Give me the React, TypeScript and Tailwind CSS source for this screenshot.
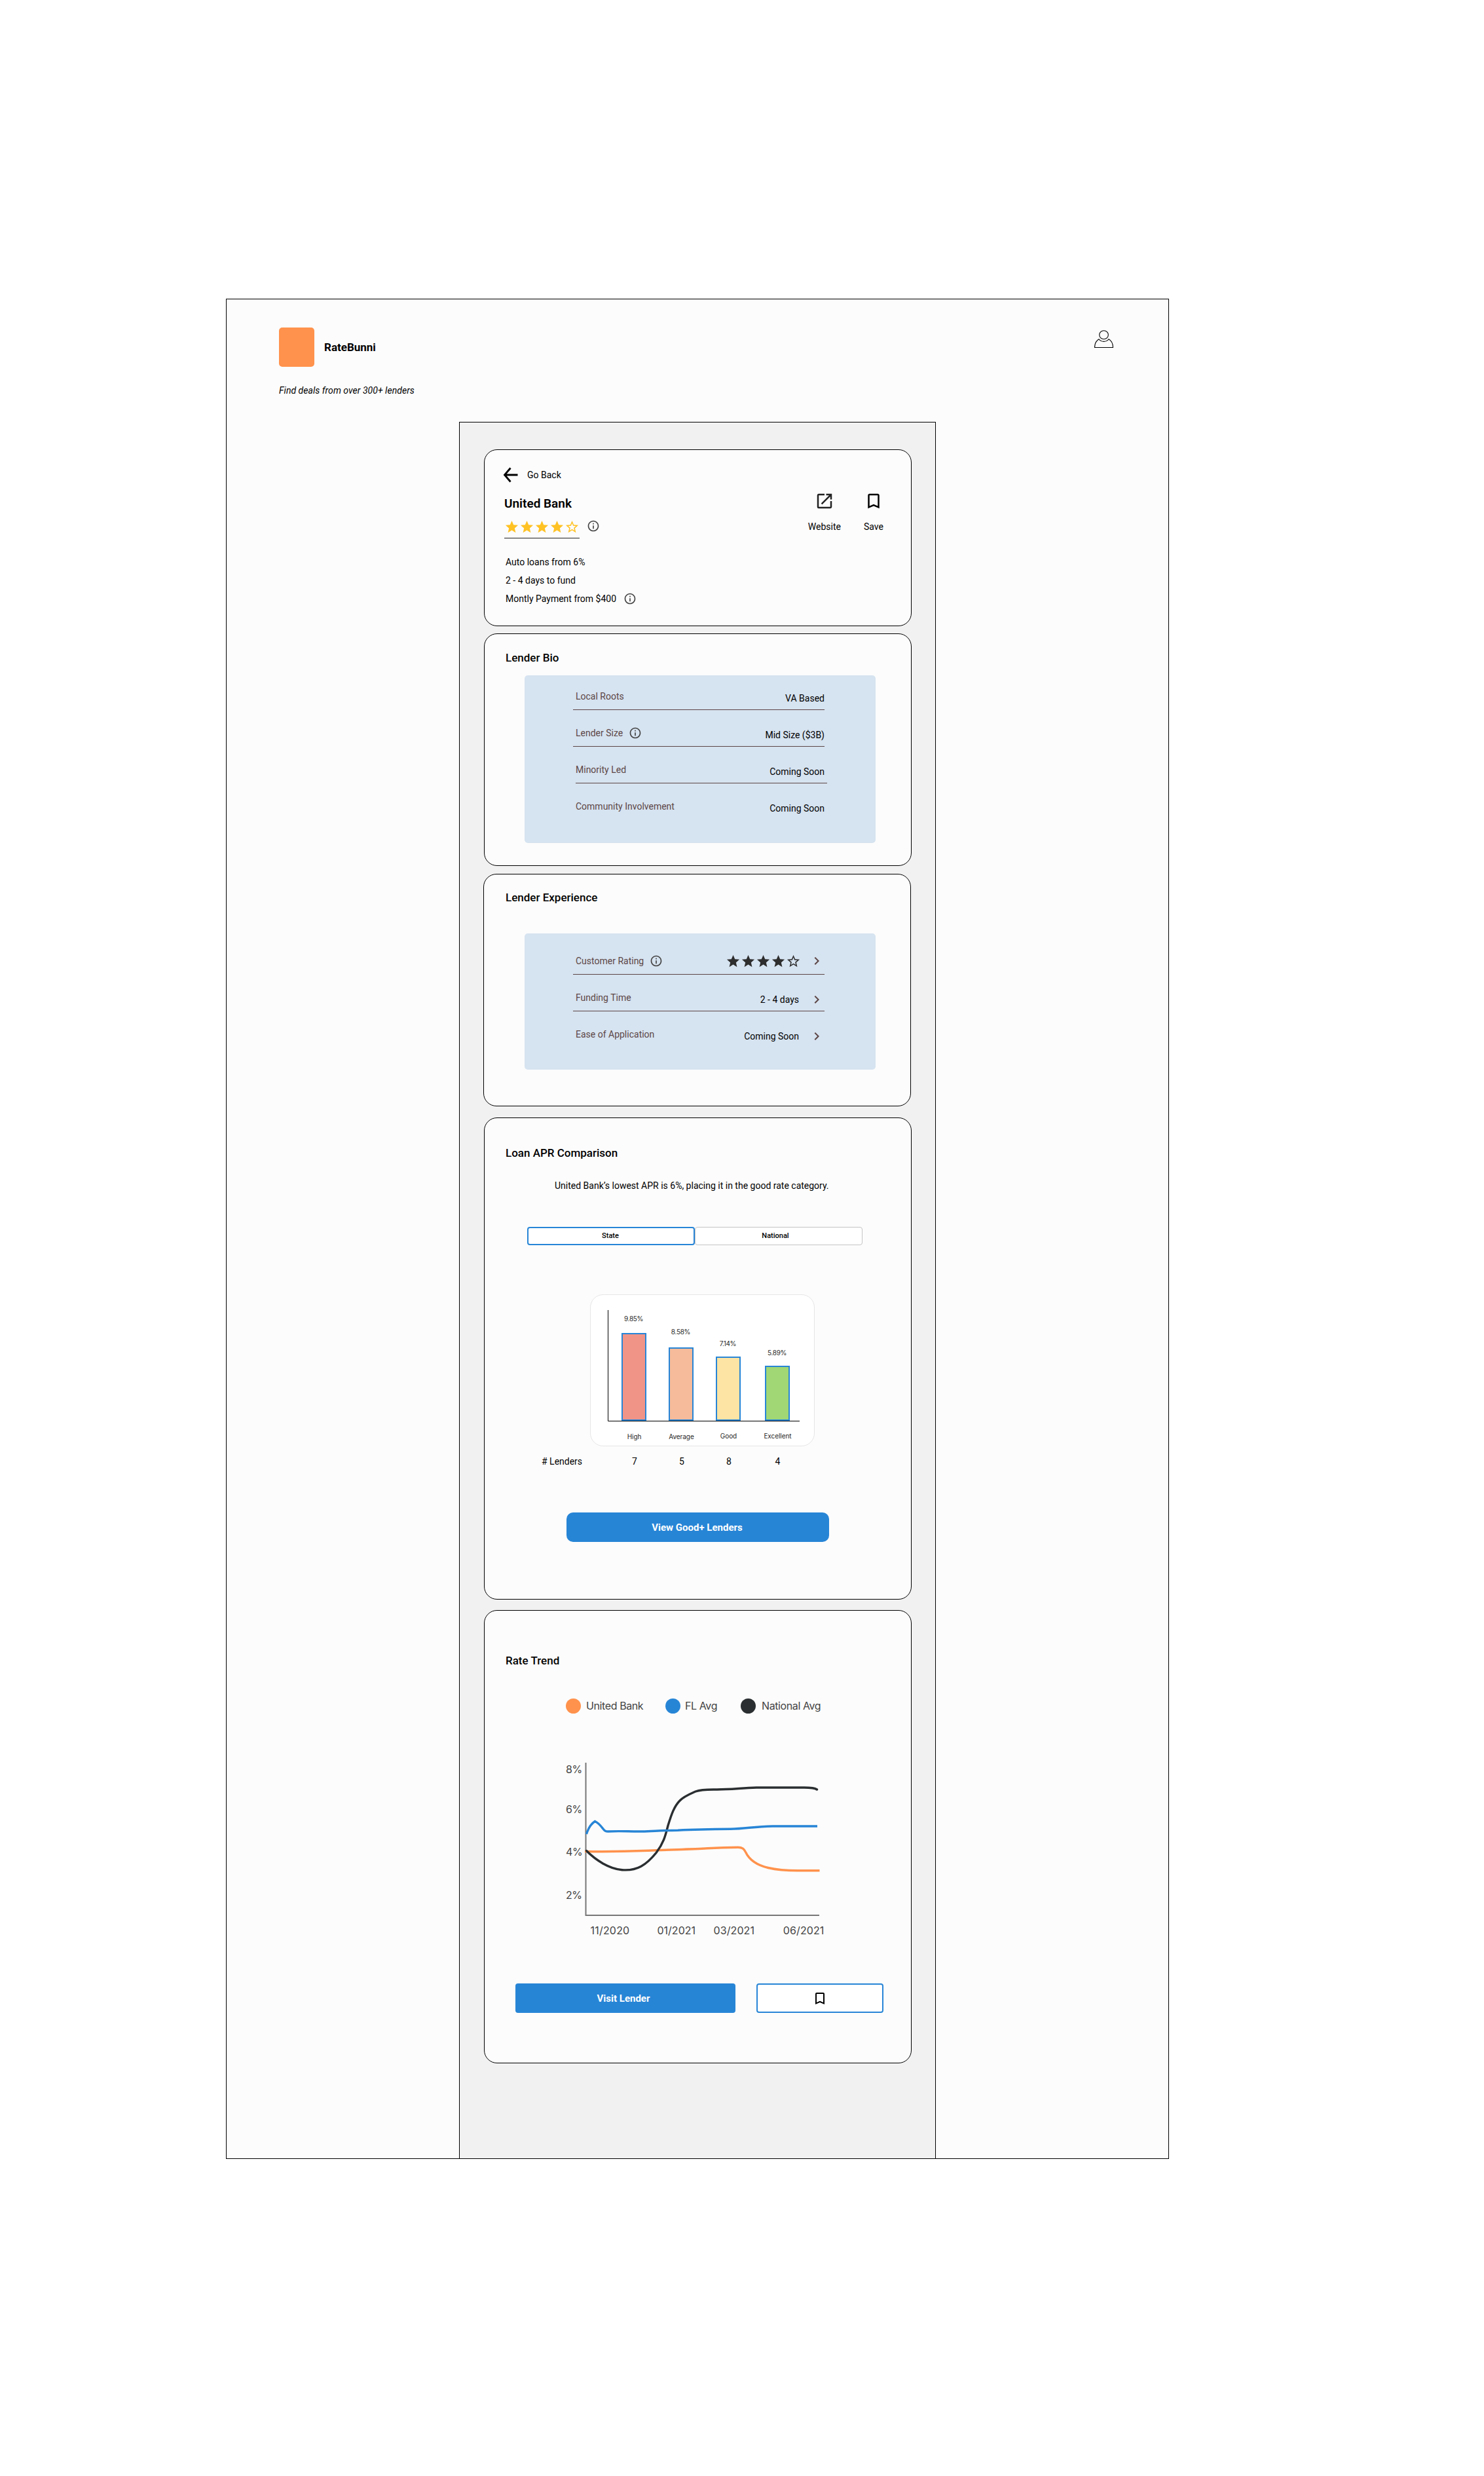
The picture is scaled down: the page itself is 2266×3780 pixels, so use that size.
import { ReactNode } from 'react';
import {
  MdBookmarkBorder,
  MdChevronRight,
  MdInfoOutline,
  MdOpenInNew,
  MdStar,
  MdStarBorder,
} from 'react-icons/md';

const aprBars = [
  { label: 'High', value: '9.85%', lenders: 7, x: 48, height: 134, fill: '#f09488', valueY: 41, labelY: 221 },
  { label: 'Average', value: '8.58%', lenders: 5, x: 120, height: 112, fill: '#f6bb9a', valueY: 61, labelY: 221 },
  { label: 'Good', value: '7.14%', lenders: 8, x: 192, height: 98, fill: '#fde4a4', valueY: 79, labelY: 220 },
  { label: 'Excellent', value: '5.89%', lenders: 4, x: 267, height: 84, fill: '#a1d775', valueY: 93, labelY: 220 },
];

const trendLegend = [
  { label: 'United Bank', dot: 'bg-[#ff924c]', width: 'w-[152px]', gap: 'gap-2' },
  { label: 'FL Avg', dot: 'bg-[#2785d6]', width: 'w-[115px]', gap: 'gap-[7px]' },
  { label: 'National Avg', dot: 'bg-[#2a2e30]', width: 'w-[130px]', gap: 'gap-[9px]' },
];

function Card({ className, children }: { className: string; children: ReactNode }) {
  return (
    <section className={`flex w-[653px] shrink-0 flex-col rounded-[20px] border border-black bg-[#fcfcfc] ${className}`}>
      {children}
    </section>
  );
}

function CardTitle({ children }: { children: ReactNode }) {
  return <h2 className="pl-8 text-[17px] font-medium leading-6">{children}</h2>;
}

function Stars({ rating }: { rating: number }) {
  return (
    <div className="flex">
      {[1, 2, 3, 4, 5].map((n) =>
        n <= rating ? <MdStar key={n} size={23} /> : <MdStarBorder key={n} size={23} />
      )}
    </div>
  );
}

function InfoIcon() {
  return <MdInfoOutline size={20} className="text-[#444]" />;
}

interface DetailRowProps {
  label: string;
  info?: boolean;
  className: string;
  valueClassName?: string;
  children: ReactNode;
}

function DetailRow({ label, info, className, valueClassName = 'pb-[7px]', children }: DetailRowProps) {
  return (
    <div className={`flex w-96 items-end justify-between border-b text-sm ${className}`}>
      <div className="flex h-[30px] gap-[8.5px] pb-2.5 text-[#5c4646]">
        {label}
        {info && <InfoIcon />}
      </div>
      <div className={valueClassName}>{children}</div>
    </div>
  );
}

function LinkValue({ children }: { children: ReactNode }) {
  return (
    <div className="flex h-5 items-center gap-[15px]">
      {children}
      <MdChevronRight size={24} className="text-[#5c4646]" />
    </div>
  );
}

function UserIcon() {
  return (
    <svg width="30" height="28" viewBox="0 0 30 28" fill="none" stroke="#000" strokeWidth="1.1">
      <ellipse cx="14.5" cy="7.2" rx="6.8" ry="6.5" />
      <path d="M7 13.8C3.2 16 .5 20.200 .5 26.500H28.500C28.500 20.200 26 16 22 13.800C20.200 16.300 17.600 17.400 14.500 17.400C11.400 17.400 8.800 16.300 7 13.800Z" />
    </svg>
  );
}

function AprChart() {
  return (
    <div className="ml-[161px] mt-[75px] h-[232px] w-[343px] rounded-[20px] border border-[#e6e6e6] bg-white">
      <svg width="341" height="230" viewBox="1 1 341 230" className="font-['Inter',sans-serif]">
        {aprBars.map((bar) => (
          <g key={bar.label} textAnchor="middle" fontSize="10" fill="#1f1f1f">
            <text x={bar.x + 18.5} y={bar.valueY} letterSpacing="-0.3">{bar.value}</text>
            <rect
              x={bar.x + 1}
              y={194 - bar.height}
              width="36"
              height={bar.height - 2}
              fill={bar.fill}
              stroke="#2785d6"
              strokeWidth="2"
            />
            <text x={bar.x + 19.5} y={bar.labelY} letterSpacing="-0.05">{bar.label}</text>
          </g>
        ))}
        <path d="M27.500 24V193.500H320" fill="none" stroke="#000" />
      </svg>
    </div>
  );
}

function TrendChart() {
  return (
    <svg
      width="450"
      height="280"
      viewBox="0 20 450 280"
      fill="none"
      className="ml-[90px] mt-16 font-['Inter',sans-serif]"
    >
      <g fill="#444" fontSize="16" letterSpacing="-0.4">
        <text x="34" y="46.500">8%</text>
        <text x="34" y="108">6%</text>
        <text x="34" y="173">4%</text>
        <text x="34" y="238.500">2%</text>
      </g>
      <g fill="#444" fontSize="16">
        <text x="71.500" y="293" letterSpacing="0.2">11/2020</text>
        <text x="173.500" y="293">01/2021</text>
        <text x="259.500" y="293" letterSpacing="0.1">03/2021</text>
        <text x="365.800" y="293" letterSpacing="0.1">06/2021</text>
      </g>
      <path d="M64.500 31V264H421" stroke="#777" strokeWidth="2" />
      <g strokeWidth="3.400">
        <path
          d="M63 166.500C95 167 128 166.500 160 165.300C192 163.800 225 163.300 250 161.800C265 161 280 160.500 297 160.300C304 160.300 306 163 308.500 167.500C315 181 328 188 343 191.500C360 195.500 372 195.800 388 195.800H421.500"
          stroke="#ff924c"
        />
        <path
          d="M65.500 165.500C80 180 100 193 120 194.700C143 196.500 157 187 172 168.500C183 154 186 143 190 127C195 111 199 98 208 89C214 82.500 223 79 232 75C241 71.500 252 72 265 72C285 72 300 70 325 69H398C407 69 414 69.500 417.500 72"
          stroke="#2a2e30"
          strokeLinecap="round"
        />
        <path
          d="M65.500 140C68 132 73 124 78.500 120.500C84 123 87 127 90.500 131.500C93.500 135.500 95 136.200 99 136C118 134.800 130 136.300 150 136C170 135.500 178 134.500 205 134.200C235 132.800 250 132.600 285 132.300C310 131.800 320 128.500 350 128H418"
          stroke="#2785d6"
        />
      </g>
    </svg>
  );
}

export default function App() {
  return (
    <div className="h-[3780px] w-[2266px] bg-white pl-[345px] pt-[456px] font-['Roboto',sans-serif] text-black">
      <main className="flex h-[2840px] w-[1440px] flex-col border border-black bg-[#fcfcfc]">
        {/* Header */}
        <header className="flex h-[187px] shrink-0 items-start justify-between pl-20 pr-[83px]">
          <div>
            <div className="mt-[43px] flex items-center gap-[15px]">
              <div className="h-[60px] w-[54px] rounded-[5px] bg-[#ff924c]" />
              <span className="text-[17px] font-bold leading-6">RateBunni</span>
            </div>
            <p className="mt-[26px] text-sm italic tracking-[0.04px]">Find deals from over 300+ lenders</p>
          </div>
          <div className="mt-[47px]">
            <UserIcon />
          </div>
        </header>

        <div className="ml-[355px] flex w-[728px] grow flex-col border-x border-t border-black bg-[#f1f1f1] pl-[37px] pt-[41px]">
          {/* Lender summary */}
          <Card className="h-[270px]">
            <div className="flex items-center gap-[13px] pl-7 pt-[26px]">
              <svg width="24" height="24" viewBox="0 0 24 24" fill="none" stroke="#000" strokeWidth="2.8">
                <path d="M11.500 1.500 2.500 12 11.500 22.500M2.500 12H22.500" />
              </svg>
              <span className="text-sm">Go Back</span>
            </div>
            <div className="flex justify-between pr-[42px]">
              <div className="pl-[30px]">
                <h1 className="mt-5 text-[19px] font-semibold leading-6">United Bank</h1>
                <div className="mt-3 flex items-start gap-[11px]">
                  <div className="border-b border-[#222] pb-[5px] text-[#ffc224]">
                    <Stars rating={4} />
                  </div>
                  <InfoIcon />
                </div>
                <div className="mt-[22px] pl-0.5 text-sm leading-7">
                  <p>Auto loans from 6%</p>
                  <p>2 - 4 days to fund</p>
                  <div className="flex items-center gap-[11px]">
                    Montly Payment from $400
                    <InfoIcon />
                  </div>
                </div>
              </div>
              <div className="mt-[13px] flex gap-[35px] text-sm">
                <div className="flex flex-col items-center gap-3.5">
                  <MdOpenInNew size={30} className="text-[#222]" />
                  Website
                </div>
                <div className="flex flex-col items-center gap-3.5">
                  <MdBookmarkBorder size={30} />
                  Save
                </div>
              </div>
            </div>
          </Card>

          {/* Lender bio */}
          <Card className="mt-[11px] h-[355px] pt-6">
            <CardTitle>Lender Bio</CardTitle>
            <div className="ml-[61px] mt-[15px] h-64 w-[536px] rounded-[5px] bg-[#d6e3f0] pl-[74px]">
              <DetailRow label="Local Roots" className="h-[53px] border-[#5c4646] pl-1">VA Based</DetailRow>
              <DetailRow label="Lender Size" info className="h-14 border-[#5c4646] pl-1">Mid Size ($3B)</DetailRow>
              <DetailRow label="Minority Led" className="ml-1 h-14 border-[#5c4646] pr-1">Coming Soon</DetailRow>
              <DetailRow label="Community Involvement" className="h-14 border-transparent pl-1">
                Coming Soon
              </DetailRow>
            </div>
          </Card>

          {/* Lender experience */}
          <Card className="-ml-px mt-3 h-[355px] pt-[23px]">
            <div className="pl-px">
              <CardTitle>Lender Experience</CardTitle>
            </div>
            <div className="ml-[62px] mt-[43px] h-52 w-[536px] rounded-[5px] bg-[#d6e3f0] pl-[74px]">
              <DetailRow
                label="Customer Rating"
                info
                className="h-[63px] border-[#5c4646] pl-1"
                valueClassName="pb-2.5 text-[#2e2e2e]"
              >
                <LinkValue>
                  <div className="-mr-[3px]">
                    <Stars rating={4} />
                  </div>
                </LinkValue>
              </DetailRow>
              <DetailRow label="Funding Time" className="h-14 border-[#5c4646] pl-1">
                <LinkValue>2 - 4 days</LinkValue>
              </DetailRow>
              <DetailRow label="Ease of Application" className="h-14 border-transparent pl-1">
                <LinkValue>Coming Soon</LinkValue>
              </DetailRow>
            </div>
          </Card>

          {/* APR comparison */}
          <Card className="mt-[17px] h-[736px] pt-[41px]">
            <CardTitle>Loan APR Comparison</CardTitle>
            <p className="mt-7 pl-[107px] text-sm">
              United Bank’s lowest APR is 6%, placing it in the good rate category.
            </p>
            <div className="ml-[65px] mt-[53px] flex h-7 w-[512px] text-[11px] font-medium">
              <button className="w-64 rounded-[4px] border-2 border-[#2785d6] bg-white pr-0.5 pt-px">State</button>
              <button className="w-64 rounded-[4px] border border-[#c4c4c4] bg-white pr-2.5 pt-px">National</button>
            </div>
            <AprChart />
            <div className="mt-[13px] flex pl-[87px] text-sm">
              <span className="w-[106px]"># Lenders</span>
              <div className="flex text-center">
                {aprBars.map((bar) => (
                  <span key={bar.label} className="w-[72px] last:w-[77px]">{bar.lenders}</span>
                ))}
              </div>
            </div>
            <button className="ml-[125px] mt-[68px] h-[45px] w-[401px] rounded-[10px] bg-[#2785d6] pr-0.5 pt-px text-[15px] font-bold text-white">
              View Good+ Lenders
            </button>
          </Card>

          {/* Rate trend */}
          <Card className="mt-4 h-[692px] pt-16">
            <CardTitle>Rate Trend</CardTitle>
            <div className="ml-[124px] mt-[45px] flex h-6 items-center font-['Inter',sans-serif] text-[#444]">
              {trendLegend.map((item) => (
                <div key={item.label} className={`flex items-center ${item.width} ${item.gap}`}>
                  <span className={`size-[23px] shrink-0 rounded-full ${item.dot}`} />
                  <span className="whitespace-nowrap leading-6 tracking-[-0.4px]">{item.label}</span>
                </div>
              ))}
            </div>
            <TrendChart />
            <div className="ml-[47px] mt-[68px] flex gap-8">
              <button className="h-[45px] w-[336px] rounded-[4px] bg-[#2785d6] pr-1.5 pt-px text-[15px] font-bold text-white">
                Visit Lender
              </button>
              <button className="flex h-[45px] w-[194px] items-center justify-center rounded-[4px] border-2 border-[#2785d6] bg-white">
                <MdBookmarkBorder size={24} />
              </button>
            </div>
          </Card>
        </div>
      </main>
    </div>
  );
}
